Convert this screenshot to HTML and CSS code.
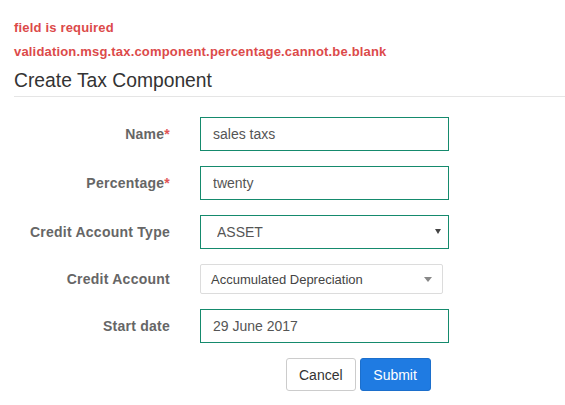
FILE: index.html
```html
<!DOCTYPE html>
<html>
<head>
<meta charset="utf-8">
<link rel="stylesheet" href="styles.css">
</head>
<body>
<div class="errors">
  <div class="error">field is required</div>
  <div class="error">validation.msg.tax.component.percentage.cannot.be.blank</div>
</div>
<h3 class="title">Create Tax Component</h3>
<form class="form">
  <div class="row">
    <label class="label">Name<span class="req">*</span></label>
    <input class="control" type="text" value="sales taxs">
  </div>
  <div class="row">
    <label class="label">Percentage<span class="req">*</span></label>
    <input class="control" type="text" value="twenty">
  </div>
  <div class="row">
    <label class="label">Credit Account Type</label>
    <div class="select-wrap">
      <select class="control select"><option>ASSET</option></select>
      <svg class="arrow" width="6" height="5" viewBox="0 0 6 5"><path d="M0 0H6L3 5Z" fill="#444"/></svg>
    </div>
  </div>
  <div class="row">
    <label class="label">Credit Account</label>
    <div class="chooser">
      <span class="chooser-text">Accumulated Depreciation</span>
      <svg class="chooser-arrow" width="8" height="5" viewBox="0 0 8 5"><path d="M0 0H8L4 5Z" fill="#888"/></svg>
    </div>
  </div>
  <div class="row">
    <label class="label">Start date</label>
    <input class="control" type="text" value="29 June 2017">
  </div>
  <div class="actions">
    <button type="button" class="btn btn-default">Cancel</button>
    <button type="button" class="btn btn-primary">Submit</button>
  </div>
</form>
</body>
</html>
```
FILE: styles.css
```css
html, body {
  margin: 0;
  padding: 0;
  background: #fff;
  font-family: "Liberation Sans", Arial, sans-serif;
  font-size: 14px;
  color: #333;
}
.errors {
  padding: 16px 0 0 14px;
}
.error {
  color: #dc4a4a;
  font-weight: bold;
  font-size: 13px;
  letter-spacing: 0.18px;
  line-height: 24px;
}
.title {
  margin: 6px 0 0 14px;
  padding: 0 0 4px 0;
  font-size: 19.3px;
  font-weight: normal;
  line-height: 22px;
  color: #333;
  border-bottom: 1px solid #e5e5e5;
}
.form {
  margin: 20px 0 0 0;
}
.row {
  display: grid;
  grid-template-columns: 170px 249px;
  column-gap: 30px;
  align-items: center;
  margin-bottom: 15px;
}
.label {
  text-align: right;
  font-weight: bold;
  color: #666;
  font-size: 14px;
  letter-spacing: 0.25px;
}
.req {
  color: #e05555;
}
.control {
  box-sizing: border-box;
  width: 249px;
  height: 34px;
  margin: 0;
  padding: 0 12px;
  border: 1px solid #158a6d;
  border-radius: 0;
  background: #fff;
  font-family: "Liberation Sans", Arial, sans-serif;
  font-size: 14px;
  color: #555;
  outline: none;
}
.select-wrap {
  position: relative;
  width: 249px;
  height: 34px;
}
.select {
  appearance: none;
  -webkit-appearance: none;
  padding-left: 16px;
  display: block;
}
.arrow {
  position: absolute;
  right: 8px;
  top: 14px;
}
.chooser {
  box-sizing: border-box;
  width: 243px;
  height: 30px;
  border: 1px solid #dcdcdc;
  border-radius: 2px;
  padding: 0 10px;
  display: flex;
  align-items: center;
  justify-content: space-between;
  font-size: 13px;
  color: #444;
}
.actions {
  display: flex;
  gap: 4px;
  margin-left: 286px;
}
.btn {
  box-sizing: border-box;
  height: 33px;
  padding: 0 12px;
  font-family: "Liberation Sans", Arial, sans-serif;
  font-size: 14px;
  border-radius: 3px;
  border: 1px solid #ccc;
  cursor: pointer;
}
.btn-default {
  background: #fff;
  color: #333;
}
.btn-primary {
  background: #1f7be2;
  border-color: #1c6fcc;
  color: #fff;
  width: 71px;
}
```
